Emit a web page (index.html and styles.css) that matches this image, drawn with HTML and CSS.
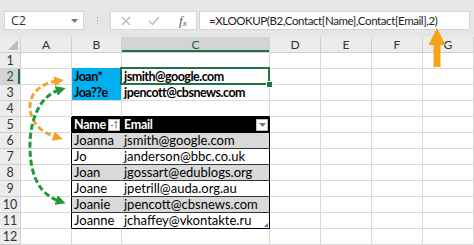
FILE: index.html
```html
<!DOCTYPE html>
<html>
<head>
<meta charset="utf-8">
<link rel="stylesheet" href="styles.css">
</head>
<body>
<div class="app">
  <div class="fbar">
    <div class="namebox"><span class="nb-text">C2</span><svg class="nb-dd" width="7" height="4" viewBox="0 0 7 4"><path d="M0 0 L7 0 L3.5 4 z" fill="#777"/></svg></div>
    <div class="sep"><i></i><i></i><i></i></div>
    <div class="btns">
      <svg class="bx" width="10" height="10" viewBox="0 0 10 10"><path d="M1 1 L9 9 M9 1 L1 9" stroke="#b9b9b9" stroke-width="1.3"/></svg>
      <svg class="bc" width="12" height="10" viewBox="0 0 12 10"><path d="M1 5 L4.5 8.5 L11 1" stroke="#b9b9b9" stroke-width="1.3" fill="none"/></svg>
      <span class="fx"><i>f</i><sub>x</sub></span>
    </div>
    <div class="formula">=XLOOKUP(B2,Contact[Name],Contact[Email],2)</div>
  </div>

  <div class="sheet">
    <div class="row hdr">
      <div class="corner"><svg width="10" height="10" viewBox="0 0 10 10"><path d="M10 0 L10 10 L0 10 z" fill="#bdbdbd"/></svg></div>
      <div class="ch">A</div><div class="ch">B</div><div class="ch sel">C</div><div class="ch">D</div><div class="ch">E</div><div class="ch">F</div><div class="ch">G</div>
    </div>
    <div class="row">
      <div class="rh">1</div><div class="c"></div><div class="c b-top-blue"></div><div class="c"></div><div class="c"></div><div class="c"></div><div class="c"></div><div class="c"></div>
    </div>
    <div class="row">
      <div class="rh sel">2</div><div class="c"></div><div class="c blue b"><span>Joan*</span></div><div class="c active b"><span>jsmith@google.com</span></div><div class="c"></div><div class="c"></div><div class="c"></div><div class="c"></div>
    </div>
    <div class="row">
      <div class="rh">3</div><div class="c"></div><div class="c blue b last"><span>Joa??e</span></div><div class="c b"><span>jpencott@cbsnews.com</span></div><div class="c"></div><div class="c"></div><div class="c"></div><div class="c"></div>
    </div>
    <div class="row">
      <div class="rh">4</div><div class="c"></div><div class="c tb-above"></div><div class="c tb-above"></div><div class="c"></div><div class="c"></div><div class="c"></div><div class="c"></div>
    </div>
    <div class="row">
      <div class="rh">5</div><div class="c tl"></div>
      <div class="c th th-b"><span>Name</span><span class="fbtn"><svg width="9" height="9" viewBox="0 0 9 9"><path d="M0.5 5 L3.5 5 L2 6.6 z" fill="#666"/><path d="M6 8.5 L6 1.5 M4.5 3 L6 1.2 L7.5 3" stroke="#666" stroke-width="0.9" fill="none"/></svg></span></div>
      <div class="c th th-c"><span>Email</span><span class="fbtn"><svg width="7" height="4" viewBox="0 0 7 4"><path d="M0 0 L7 0 L3.5 4 z" fill="#777"/></svg></span></div>
      <div class="c"></div><div class="c"></div><div class="c"></div><div class="c"></div>
    </div>
    <div class="row">
      <div class="rh">6</div><div class="c tl"></div><div class="c td tb gray"><span>Joanna</span></div><div class="c td tc gray"><span>jsmith@google.com</span></div><div class="c"></div><div class="c"></div><div class="c"></div><div class="c"></div>
    </div>
    <div class="row">
      <div class="rh">7</div><div class="c tl"></div><div class="c td tb"><span>Jo</span></div><div class="c td tc"><span>janderson@bbc.co.uk</span></div><div class="c"></div><div class="c"></div><div class="c"></div><div class="c"></div>
    </div>
    <div class="row">
      <div class="rh">8</div><div class="c tl"></div><div class="c td tb gray"><span>Joan</span></div><div class="c td tc gray"><span>jgossart@edublogs.org</span></div><div class="c"></div><div class="c"></div><div class="c"></div><div class="c"></div>
    </div>
    <div class="row">
      <div class="rh">9</div><div class="c tl"></div><div class="c td tb"><span>Joane</span></div><div class="c td tc"><span>jpetrill@auda.org.au</span></div><div class="c"></div><div class="c"></div><div class="c"></div><div class="c"></div>
    </div>
    <div class="row">
      <div class="rh">10</div><div class="c tl"></div><div class="c td tb gray"><span>Joanie</span></div><div class="c td tc gray"><span>jpencott@cbsnews.com</span></div><div class="c"></div><div class="c"></div><div class="c"></div><div class="c"></div>
    </div>
    <div class="row">
      <div class="rh">11</div><div class="c tl"></div><div class="c td tb"><span>Joanne</span></div><div class="c td tc tend"><span>jchaffey@vkontakte.ru</span></div><div class="c"></div><div class="c"></div><div class="c"></div><div class="c"></div>
    </div>
    <div class="row">
      <div class="rh">12</div><div class="c"></div><div class="c"></div><div class="c"></div><div class="c"></div><div class="c"></div><div class="c"></div><div class="c"></div>
    </div>
  </div>

  <svg class="overlay" width="474" height="245" viewBox="0 0 474 245">
    <defs>
      <marker id="ho" viewBox="0 0 10 10" refX="3" refY="5" markerWidth="10" markerHeight="10" markerUnits="userSpaceOnUse" orient="auto-start-reverse">
        <path d="M0 0 L10 5 L0 10 z" fill="#f2a52a"/>
      </marker>
      <marker id="hg" viewBox="0 0 10 10" refX="3" refY="5" markerWidth="10" markerHeight="10" markerUnits="userSpaceOnUse" orient="auto-start-reverse">
        <path d="M0 0 L10 5 L0 10 z" fill="#1f9a3b"/>
      </marker>
    </defs>
    <path d="M57 81 C38 84, 29 96, 30 108 C31 122, 40 132, 56 137" fill="none" stroke="#f2a52a" stroke-width="3" stroke-dasharray="6 3" marker-start="url(#ho)" marker-end="url(#ho)"/>
    <path d="M59 90 C40 96, 29 120, 30 150 C31 180, 42 195, 59 201" fill="none" stroke="#1f9a3b" stroke-width="3" stroke-dasharray="6 3" marker-start="url(#hg)" marker-end="url(#hg)"/>
    <path d="M437 28 L445.5 45 L440.5 45 L440.5 67 L433.5 67 L433.5 45 L428.5 45 z" fill="#f5a418"/>
  </svg>
</div>
</body>
</html>
```

FILE: styles.css
```css
html, body {
  margin: 0;
  padding: 0;
  background: #ffffff;
}

.app {
  position: relative;
  width: 474px;
  height: 245px;
  overflow: hidden;
  font-family: "Lato", "Open Sans", sans-serif;
}

/* formula bar */
.fbar {
  height: 37px;
  box-sizing: border-box;
  background: #e6e6e6;
  display: flex;
  align-items: flex-start;
  padding: 11px 4px 0 4px;
}

.namebox {
  width: 80px;
  height: 19px;
  box-sizing: border-box;
  background: #fff;
  border: 1px solid #d4d4d4;
  display: flex;
  align-items: center;
  padding: 0 5px 0 6px;
  font-family: "Open Sans", sans-serif;
  font-size: 12.5px;
  color: #333;
}

.nb-text { flex: 1; }

.sep {
  width: 26px;
  height: 19px;
  display: flex;
  flex-direction: column;
  align-items: center;
  justify-content: center;
  gap: 2px;
}
.sep i {
  display: block;
  width: 1px;
  height: 1px;
  background: #9a9a9a;
}

.btns {
  width: 87px;
  height: 19px;
  box-sizing: border-box;
  background: #fff;
  border: 1px solid #d8d8d8;
  display: flex;
  align-items: center;
  padding-left: 10px;
}
.bx { margin-right: 17px; }
.bc { margin-right: 19px; }
.fx {
  font-family: "Liberation Serif", serif;
  font-size: 13px;
  color: #555;
}
.fx sub { font-size: 9px; font-style: italic; vertical-align: -1px; }

.formula {
  margin-left: 2px;
  width: 271px;
  height: 19px;
  box-sizing: border-box;
  background: #fff;
  border: 1px solid #d4d4d4;
  padding-left: 9px;
  font-family: "Lato", sans-serif;
  font-size: 11.5px;
  letter-spacing: -0.4px;
  line-height: 17px;
  color: #222;
  white-space: nowrap;
}

/* sheet grid */
.row {
  display: grid;
  grid-template-columns: 21px 51px 50px 148px 51px 51px 51px 51px;
  height: 16px;
}
.row > div {
  box-sizing: border-box;
  border-right: 1px solid #d9d9d9;
  border-bottom: 1px solid #d9d9d9;
  font-size: 13px;
  line-height: 15px;
  white-space: nowrap;
  overflow: visible;
  color: #000;
}

.hdr > div {
  background: #ececec;
  border-color: #cfcfcf;
  text-align: center;
  font-size: 12px;
  color: #333;
}
.corner {
  display: flex;
  align-items: flex-end;
  justify-content: flex-end;
  padding: 0 2px 2px 0;
}
.ch.sel {
  background: #d4d4d4;
  box-shadow: inset 0 -2px #217346;
  color: #1e5a36;
}

.rh {
  background: #ececec;
  border-color: #cfcfcf !important;
  text-align: center;
  font-size: 12.5px !important;
  color: #333 !important;
}
.rh.sel {
  background: #d4d4d4;
  box-shadow: inset -2px 0 #217346;
  color: #1e5a36 !important;
}

.c { padding-left: 2px; }
.c span { position: relative; z-index: 1; }
.b {
  font-weight: 700;
  font-size: 12.5px !important;
  letter-spacing: -0.5px;
}

.b-top-blue { border-bottom-color: #00b0f0 !important; }
.blue {
  background: #00b0f0;
  border-bottom-color: #00b0f0 !important;
  border-right-color: #00b0f0 !important;
}
.blue.last { border-bottom-color: #d9d9d9 !important; border-right-color: #d9d9d9 !important; }

.active { position: relative; }
.active::after {
  content: "";
  position: absolute;
  left: -2px;
  top: -2px;
  right: -1px;
  bottom: -1px;
  border: 2px solid #217346;
}
.active::before {
  content: "";
  position: absolute;
  right: -4px;
  bottom: -4px;
  width: 5px;
  height: 5px;
  background: #217346;
  border: 1px solid #fff;
  z-index: 2;
}

/* table */
.tb-above { border-bottom-color: #000 !important; }
.tl { border-right-color: #000 !important; }
.th {
  background: #000;
  color: #fff !important;
  font-weight: 700;
  display: flex;
  align-items: center;
  border-bottom-color: #000 !important;
  font-size: 12.5px !important;
  letter-spacing: -0.3px;
}
.th span:first-child { flex: 1; }
.th-b { border-right-color: #000 !important; }
.th-c { border-right-color: #000 !important; }
.fbtn {
  width: 12px;
  height: 12px;
  box-sizing: border-box;
  background: #fff;
  border: 1px solid #bdbdbd;
  display: flex;
  align-items: center;
  justify-content: center;
  margin-right: 1px;
}

.td { border-bottom-color: #333 !important; }
.tb { border-right-color: transparent !important; }
.tb.gray { border-right-color: #d9d9d9 !important; }
.tc { border-right-color: #000 !important; }
.gray { background: #d9d9d9; }
.row:nth-child(12) .td { border-bottom-color: #000 !important; }

.tend { position: relative; }
.tend::after {
  content: "";
  position: absolute;
  right: 1px;
  bottom: 1px;
  width: 0;
  height: 0;
  border-left: 4px solid transparent;
  border-bottom: 4px solid #3f6fa8;
}

.overlay {
  position: absolute;
  left: 0;
  top: 0;
  pointer-events: none;
}
```
